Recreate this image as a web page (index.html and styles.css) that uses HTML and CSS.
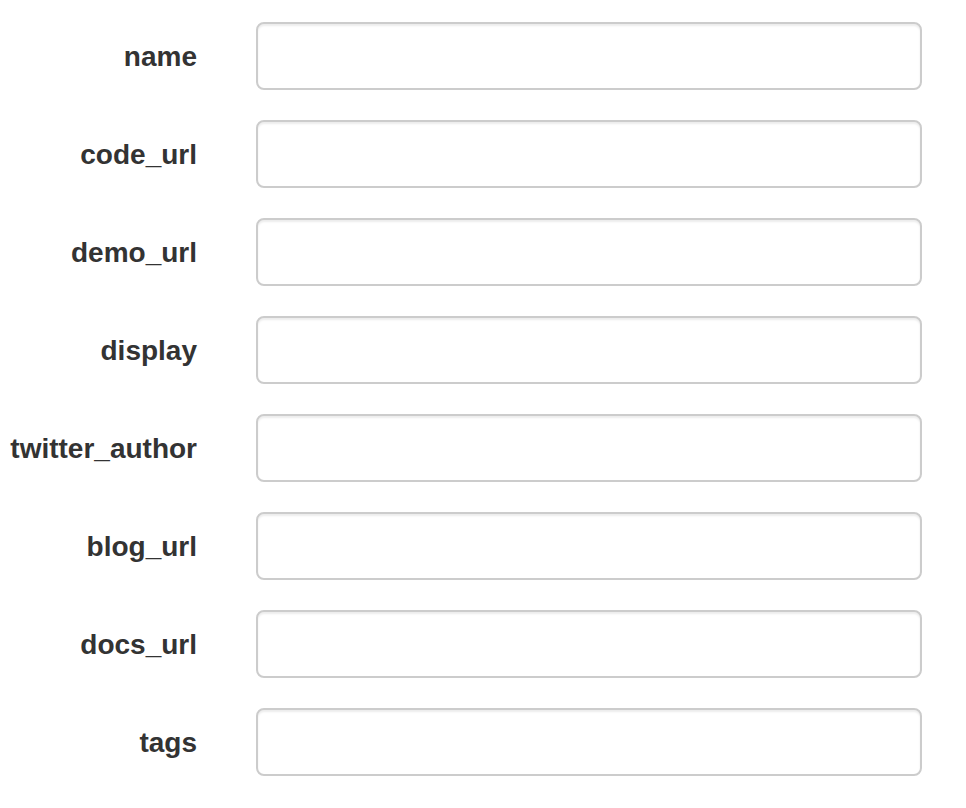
FILE: index.html
```html
<!DOCTYPE html>
<html lang="en">
<head>
    <meta charset="UTF-8">
    <meta name="viewport" content="width=device-width, initial-scale=1.0">
    <title>Project</title>
    <link rel="stylesheet" href="styles.css">
</head>
<body>
    <form class="form-horizontal" id="projectForm">
        <div class="form-group">
            <label for="name">name</label>
            <input type="text" id="name" class="form-control">
        </div>
        <div class="form-group">
            <label for="code_url">code_url</label>
            <input type="text" id="code_url" class="form-control">
        </div>
        <div class="form-group">
            <label for="demo_url">demo_url</label>
            <input type="text" id="demo_url" class="form-control">
        </div>
        <div class="form-group">
            <label for="display">display</label>
            <input type="text" id="display" class="form-control">
        </div>
        <div class="form-group">
            <label for="twitter_author">twitter_author</label>
            <input type="text" id="twitter_author" class="form-control">
        </div>
        <div class="form-group">
            <label for="blog_url">blog_url</label>
            <input type="text" id="blog_url" class="form-control">
        </div>
        <div class="form-group">
            <label for="docs_url">docs_url</label>
            <input type="text" id="docs_url" class="form-control">
        </div>
        <div class="form-group">
            <label for="tags">tags</label>
            <input type="text" id="tags" class="form-control">
        </div>
    </form>
</body>
</html>
```

FILE: styles.css
```css
* {
    margin: 0;
    padding: 0;
    box-sizing: border-box;
}

body {
    font-family: "Liberation Sans", Arial, sans-serif;
    font-size: 28px;
    line-height: 40px;
    color: #333;
    background: #fff;
}

.form-horizontal {
    display: flex;
    flex-direction: column;
    gap: 30px;
    padding-top: 22px;
}

.form-group {
    display: grid;
    grid-template-columns: 197px 666px;
    column-gap: 59px;
}

label {
    display: block;
    text-align: right;
    font-weight: 700;
    padding-top: 15px;
    white-space: nowrap;
}

.form-control {
    display: block;
    width: 100%;
    height: 68px;
    padding: 12px 24px;
    font-family: inherit;
    font-size: 28px;
    color: #555;
    background: #fff;
    border: 2px solid #ccc;
    border-radius: 8px;
    box-shadow: inset 0 2px 2px rgba(0,0,0,0.075);
}

.form-control:focus {
    outline: none;
    border-color: #66afe9;
}
```
